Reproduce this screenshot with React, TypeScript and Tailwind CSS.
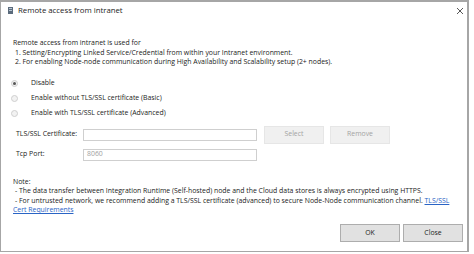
import React from "react";

const font = { fontFamily: '"Open Sans", "Noto Sans", sans-serif' };

function Radio({ checked, label }: { checked?: boolean; label: string }) {
  return (
    <div className="flex h-[15px] items-center">
      <div className="ml-[10px] flex h-[7px] w-[7px] items-center justify-center rounded-full border border-[#cfcfcf] bg-[#f2f2f2]">
        {checked && <div className="h-[3px] w-[3px] rounded-full bg-[#555]" />}
      </div>
      <span className="ml-[13px] text-[6.9px] text-[#222]">{label}</span>
    </div>
  );
}

export default function App() {
  return (
    <div className="h-[254px] w-[474px] bg-white" style={font}>
      <div className="flex h-[252px] w-[469px] flex-col border-t-2 border-r-2 border-b border-l border-[#a6a6a6] bg-white">
        {/* title bar */}
        <div className="flex h-[17px] items-center">
          <svg className="ml-[7px]" width="5" height="7" viewBox="0 0 5 7">
            <rect x="0" y="0" width="5" height="7" fill="#5b6b7c" />
            <rect x="1" y="1" width="3" height="1" fill="#b9c6d3" />
            <rect x="1" y="3" width="3" height="1" fill="#b9c6d3" />
          </svg>
          <span className="ml-[5px] text-[7.8px] text-[#222]">Remote access from intranet</span>
          <svg className="ml-auto mr-[3px]" width="8" height="8" viewBox="0 0 8 8">
            <path d="M1 1 L7 7 M7 1 L1 7" stroke="#444" strokeWidth="0.9" />
          </svg>
        </div>

        {/* description */}
        <div className="mt-[19px] pl-[12px] text-[6.9px] leading-[9.5px] text-[#222]">
          <div>Remote access from intranet is used for</div>
          <div className="pl-[2px]">1. Setting/Encrypting Linked Service/Credential from within your Intranet environment.</div>
          <div className="pl-[2px]">2. For enabling Node-node communication during High Availability and Scalability setup (2+ nodes).</div>
        </div>

        {/* radios */}
        <div className="mt-[9px] flex flex-col">
          <Radio checked label="Disable" />
          <Radio label="Enable without TLS/SSL certificate (Basic)" />
          <Radio label="Enable with TLS/SSL certificate (Advanced)" />
        </div>

        {/* cert row */}
        <div className="mt-[5px] flex h-[18px] items-center pl-[15px]">
          <span className="w-[67px] text-[6.9px] text-[#222]">TLS/SSL Certificate:</span>
          <div className="h-[12px] w-[174px] border border-[#cfcfcf] bg-white" />
          <div className="ml-[7px] flex h-[18px] w-[60px] items-center justify-center border border-[#e6e6e6] bg-[#f0f0f0] text-[6.9px] text-[#a3a3a3]">
            Select
          </div>
          <div className="ml-[6px] flex h-[18px] w-[60px] items-center justify-center border border-[#e6e6e6] bg-[#f0f0f0] text-[6.9px] text-[#a3a3a3]">
            Remove
          </div>
        </div>

        {/* port row */}
        <div className="mt-[5px] flex h-[12px] items-center pl-[15px]">
          <span className="w-[67px] text-[6.9px] text-[#222]">Tcp Port:</span>
          <div className="flex h-[12px] w-[174px] items-center border border-[#cfcfcf] bg-white pl-[3px] text-[6.9px] text-[#a0a0a0]">
            8060
          </div>
        </div>

        {/* note */}
        <div className="mt-[16px] pl-[12px] text-[6.9px] leading-[9.6px] text-[#222]">
          <div>Note:</div>
          <div className="pl-[2px]">- The data transfer between Integration Runtime (Self-hosted) node and the Cloud data stores is always encrypted using HTTPS.</div>
          <div className="pl-[2px]">
            - For untrusted network, we recommend adding a TLS/SSL certificate (advanced) to secure Node-Node communication channel.{" "}
            <span className="text-[#2a64c5] underline">TLS/SSL</span>
          </div>
          <div className="text-[#2a64c5] underline">Cert Requirements</div>
        </div>

        {/* buttons */}
        <div className="mt-auto mb-[9px] flex justify-end gap-[3px] pr-[4px]">
          <div className="flex h-[18px] w-[60px] items-center justify-center border border-[#adadad] bg-[#e1e1e1] text-[6.9px] text-[#222]">
            OK
          </div>
          <div className="flex h-[18px] w-[60px] items-center justify-center border border-[#adadad] bg-[#e1e1e1] text-[6.9px] text-[#222]">
            Close
          </div>
        </div>
      </div>
    </div>
  );
}
